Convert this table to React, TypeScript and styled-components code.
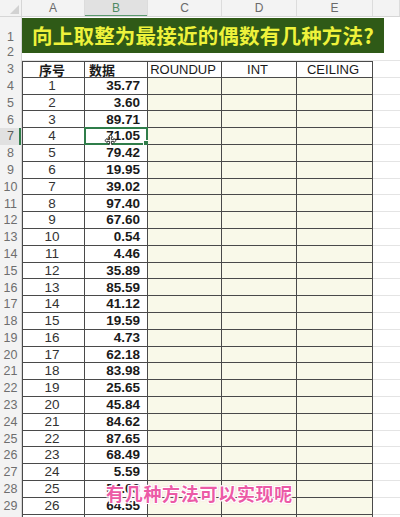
import React from "react";
import styled, { createGlobalStyle, css } from "styled-components";

const GlobalStyle = createGlobalStyle`
  html, body {
    margin: 0;
    padding: 0;
    background: #ffffff;
  }
  body {
    width: 400px;
    height: 517px;
    overflow: hidden;
    font-family: "Liberation Sans", "Noto Sans CJK SC", sans-serif;
  }
`;

const COLS = "22px 63px 63px 74px 75px 76px 1fr";
const ROW_H = 16.8;

const data: [number, string][] = [
  [1, "35.77"],
  [2, "3.60"],
  [3, "89.71"],
  [4, "71.05"],
  [5, "79.42"],
  [6, "19.95"],
  [7, "39.02"],
  [8, "97.40"],
  [9, "67.60"],
  [10, "0.54"],
  [11, "4.46"],
  [12, "35.89"],
  [13, "85.59"],
  [14, "41.12"],
  [15, "19.59"],
  [16, "4.73"],
  [17, "62.18"],
  [18, "83.98"],
  [19, "25.65"],
  [20, "45.84"],
  [21, "84.62"],
  [22, "87.65"],
  [23, "68.49"],
  [24, "5.59"],
  [25, "54.03"],
  [26, "64.55"],
  [27, "1.36"],
];

const Sheet = styled.div`
  position: relative;
  width: 400px;
  height: 517px;
  overflow: hidden;
  color: #1f1f1f;
`;

const HeaderRow = styled.div`
  display: grid;
  grid-template-columns: ${COLS};
  height: 17px;
  background: #f3f3f3;
  border-bottom: 1px solid #d6d6d6;
  box-sizing: border-box;
`;

const Corner = styled.div`
  position: relative;
  border-right: 1px solid #d6d6d6;
  &::after {
    content: "";
    position: absolute;
    right: 2px;
    bottom: 2px;
    border-left: 9px solid transparent;
    border-bottom: 9px solid #d2d2d2;
  }
`;

const ColLetter = styled.div<{ $active?: boolean }>`
  display: flex;
  align-items: center;
  justify-content: center;
  font-size: 12px;
  line-height: 1;
  color: #6a6a6a;
  border-right: 1px solid #dcdcdc;
  ${(p) =>
    p.$active &&
    css`
      background: #e1e1e1;
      color: #4f8a63;
      box-shadow: inset 0 -1px 0 #5a9a70;
    `}
`;

const TitleBand = styled.div`
  display: grid;
  grid-template-columns: 22px 1fr;
  height: 44px;
`;

const TitleHeads = styled.div`
  display: grid;
  grid-template-rows: 27px 17px;
  background: #f3f3f3;
  border-right: 1px solid #d6d6d6;
`;

const RowHead = styled.div<{ $active?: boolean }>`
  display: flex;
  align-items: center;
  justify-content: center;
  font-size: 12.5px;
  line-height: 1;
  color: #6e6e6e;
  background: #f3f3f3;
  border-right: 1px solid #d6d6d6;
  box-sizing: border-box;
  ${(p) =>
    p.$active &&
    css`
      background: #e1e1e1;
      color: #5d5d5d;
      box-shadow: inset -2px 0 0 #2f7d4a;
    `}
`;

const TitleHead = styled(RowHead)<{ $low?: boolean }>`
  border-right: none;
  align-items: ${(p) => (p.$low ? "flex-end" : "center")};
  padding-bottom: ${(p) => (p.$low ? "1px" : "0")};
`;

const TitleArea = styled.div`
  padding-top: 1px;
  border-bottom: 1px solid #e4e4e4;
  box-sizing: border-box;
`;

const Title = styled.div`
  width: 362px;
  height: 35px;
  background: #2f5a17;
  color: #eef23b;
  display: flex;
  align-items: center;
  justify-content: center;
  font-family: "Noto Sans CJK SC", sans-serif;
  font-weight: 700;
  font-size: 20.5px;
  line-height: 1;
  letter-spacing: 0.2px;
`;

const Row = styled.div`
  display: grid;
  grid-template-columns: ${COLS};
  height: ${ROW_H}px;
`;

const Cell = styled.div<{
  $align?: "left" | "center" | "right";
  $bold?: boolean;
  $fill?: boolean;
  $first?: boolean;
  $top?: boolean;
}>`
  position: relative;
  display: flex;
  align-items: center;
  justify-content: ${(p) =>
    p.$align === "right" ? "flex-end" : p.$align === "left" ? "flex-start" : "center"};
  padding: 0 7px 0 4px;
  box-sizing: border-box;
  font-size: 13.5px;
  line-height: 1;
  font-weight: ${(p) => (p.$bold ? 700 : 400)};
  color: ${(p) => (p.$bold ? "#1a1a1a" : "#333333")};
  background: ${(p) => (p.$fill ? "#f9f9e9" : "#ffffff")};
  border-right: 1px solid #4a4a4a;
  border-bottom: 1px solid #4a4a4a;
  ${(p) => p.$first && "border-left: 1px solid #4a4a4a;"}
  ${(p) => p.$top && "border-top: 1px solid #4a4a4a;"}
  white-space: nowrap;
`;

const HeadText = styled.span<{ $cjk?: boolean }>`
  font-family: ${(p) =>
    p.$cjk ? `"Noto Sans CJK SC", sans-serif` : `"Liberation Sans", sans-serif`};
  font-weight: ${(p) => (p.$cjk ? 700 : 400)};
  font-size: 13px;
  line-height: 1;
  color: #1a1a1a;
`;

const Blank = styled.div`
  border-bottom: 1px solid #e4e4e4;
  box-sizing: border-box;
`;

const Selection = styled.div`
  position: absolute;
  inset: -1px -1px -1px -1px;
  border: 2px solid #2f7d4a;
  pointer-events: none;
  &::after {
    content: "";
    position: absolute;
    right: -4px;
    bottom: -4px;
    width: 5px;
    height: 5px;
    background: #2f7d4a;
    border: 1px solid #ffffff;
  }
`;

const Cursor = styled.svg`
  position: absolute;
  left: 19px;
  top: 6px;
  width: 13px;
  height: 13px;
`;

const Subtitle = styled.div`
  position: absolute;
  left: 106px;
  top: 484px;
  font-family: "Noto Sans CJK SC", sans-serif;
  font-weight: 700;
  font-size: 18px;
  line-height: 1.1;
  color: #ec5aa6;
  letter-spacing: 0.7px;
  text-shadow:
    1px 0 0 #fff,
    -1px 0 0 #fff,
    0 1px 0 #fff,
    0 -1px 0 #fff,
    1px 1px 0 #fff,
    -1px -1px 0 #fff,
    1px -1px 0 #fff,
    -1px 1px 0 #fff,
    0 0 3px #f08cc0;
`;

const MoveCursor: React.FC = () => (
  <Cursor viewBox="0 0 13 13">
    <path
      d="M6.5 0.8 L8.6 3.2 H7.4 V5.6 H9.8 V4.4 L12.2 6.5 L9.8 8.6 V7.4 H7.4 V9.8 H8.6 L6.5 12.2 L4.4 9.8 H5.6 V7.4 H3.2 V8.6 L0.8 6.5 L3.2 4.4 V5.6 H5.6 V3.2 H4.4 Z"
      fill="#ffffff"
      stroke="#222"
      strokeWidth="0.9"
      strokeLinejoin="round"
    />
  </Cursor>
);

const letters = ["A", "B", "C", "D", "E", ""];

export default function App() {
  return (
    <>
      <GlobalStyle />
      <Sheet>
        <HeaderRow>
          <Corner />
          {letters.map((l) => (
            <ColLetter key={l || "rest"} $active={l === "B"}>
              {l}
            </ColLetter>
          ))}
        </HeaderRow>

        <TitleBand>
          <TitleHeads>
            <TitleHead $low>1</TitleHead>
            <TitleHead>2</TitleHead>
          </TitleHeads>
          <TitleArea>
            <Title>向上取整为最接近的偶数有几种方法?</Title>
          </TitleArea>
        </TitleBand>

        <Row>
          <RowHead>3</RowHead>
          <Cell $first $top>
            <HeadText $cjk>序号</HeadText>
          </Cell>
          <Cell $top $align="left">
            <HeadText $cjk>数据</HeadText>
          </Cell>
          <Cell $top>
            <HeadText>ROUNDUP</HeadText>
          </Cell>
          <Cell $top>
            <HeadText>INT</HeadText>
          </Cell>
          <Cell $top>
            <HeadText>CEILING</HeadText>
          </Cell>
          <Blank />
        </Row>

        {data.map(([n, v]) => {
          const rowNo = n + 3;
          const selected = rowNo === 7;
          return (
            <Row key={n}>
              <RowHead $active={selected}>{rowNo}</RowHead>
              <Cell $first>{n}</Cell>
              <Cell $align="right" $bold>
                {v}
                {selected && (
                  <>
                    <Selection />
                    <MoveCursor />
                  </>
                )}
              </Cell>
              <Cell $fill />
              <Cell $fill />
              <Cell $fill />
              <Blank />
            </Row>
          );
        })}

        <Subtitle>有几种方法可以实现呢</Subtitle>
      </Sheet>
    </>
  );
}
